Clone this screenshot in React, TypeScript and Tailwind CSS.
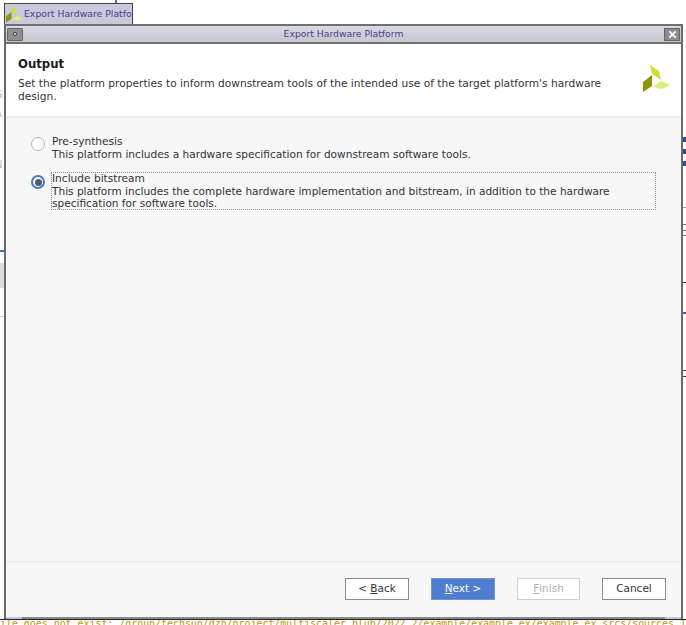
import { ReactNode } from "react";

const sans = "font-['DejaVu_Sans',sans-serif]";

// pezzi dell'applicazione dietro al dialogo
const backdrop = [
  "left-0 top-[250px] h-[2px] w-[4px] bg-[#3f73c4]",
  "left-0 top-[263px] h-[25px] w-[4px] bg-[#dedede]",
  "left-0 top-[316px] h-px w-[4px] bg-[#d0d0d0]",
  "left-[683px] top-[137px] h-[5px] w-[3px] bg-[#24508f]",
  "left-[683px] top-[149px] h-[5px] w-[3px] bg-[#24508f]",
  "left-[683px] top-[161px] h-[5px] w-[3px] bg-[#24508f]",
  "left-[683px] top-[207px] h-px w-[3px] bg-[#8aa0c8]",
  "left-[683px] top-[224px] h-px w-[3px] bg-[#777777]",
  "left-[683px] top-[230px] h-px w-[3px] bg-[#777777]",
  "left-[683px] top-[235px] h-px w-[3px] bg-[#777777]",
  "left-[683px] top-[282px] h-px w-[3px] bg-[#333333]",
  "left-[683px] top-[312px] h-[2px] w-[3px] bg-[#3f63a8]",
  "left-[683px] top-[370px] h-px w-[3px] bg-[#444444]",
  "left-[683px] top-[376px] h-px w-[3px] bg-[#444444]",
  "left-[115px] top-0 h-[3px] w-[2px] bg-[#3f73c4]",
];

function Logo({ className }: { className: string }) {
  return (
    <svg viewBox="0 0 28 28" className={className}>
      <polygon points="7,0 16,6 18,15 9,9" fill="#d3dc3a" />
      <polygon points="0,17 9,10 9,21 0,27" fill="#8e9300" />
      <polygon points="10,22 18,16 27,20 19,24" fill="#e1ea7c" />
    </svg>
  );
}

function WizardButton({
  children,
  kind = "normal",
  width = "w-[64px]",
}: {
  children: ReactNode;
  kind?: "normal" | "primary" | "disabled";
  width?: string;
}) {
  const look = {
    normal: "border-[#8a8a8a] bg-white text-[#333333]",
    primary: "border-[#6f93d8] bg-[#4f7dcf] text-white",
    disabled: "border-[#d0d0d0] bg-white text-[#b0b0b0]",
  }[kind];
  return (
    <button className={`flex h-[22px] items-center justify-center border-[1.5px] text-[10.5px] ${width} ${look}`}>
      {children}
    </button>
  );
}

function Radio({ checked = false }: { checked?: boolean }) {
  return checked ? (
    <span className="mt-[3px] flex h-[14px] w-[14px] shrink-0 items-center justify-center rounded-full border-2 border-[#4a78cc] bg-white">
      <span className="h-[7px] w-[7px] rounded-full bg-[#555a66]" />
    </span>
  ) : (
    <span className="mt-[3px] h-[14px] w-[14px] shrink-0 rounded-full border-[1.5px] border-[#b4b4b4] bg-white" />
  );
}

export default function App() {
  return (
    <div className={`relative h-[625px] w-[686px] overflow-hidden bg-white ${sans}`}>
      {backdrop.map((c) => (
        <div key={c} className={`absolute ${c}`} />
      ))}
      <span className="absolute left-[-4px] top-[87px] text-[10px] text-[#b8b8b8]">S</span>
      <span className="absolute left-[-5px] top-[106px] text-[10px] text-[#b8b8b8]">A</span>
      <span className="absolute left-[-5px] top-[157px] text-[10px] text-[#b8b8b8]">N</span>
      <div className="absolute left-0 top-[618px] whitespace-nowrap font-['DejaVu_Sans_Mono',monospace] text-[9.92px] leading-[12px] text-[#c9920e]">
        ile goes not exist: /group/techsup/dzh/project/multiscaler_blub/2022.2/example/example_ex/example_ex.srcs/sources_1
      </div>
      <div className="absolute left-0 top-[619px] h-px w-[686px] bg-[#222222]" />

      <div className="relative pl-[4px] pt-[3px]">
        {/* linguetta della barra delle applicazioni */}
        <div className="flex h-[21px] w-[129px] items-center gap-[1px] border-x border-t border-[#444444] bg-[#c9c9dd] pl-[1px]">
          <Logo className="h-[17px] w-[17px] shrink-0" />
          <span className="whitespace-nowrap text-[9.3px] text-[#4a3c8c]">Export Hardware Platfo</span>
        </div>

        <div className="flex h-[595px] w-[679px] flex-col border-x-2 border-x-[#6a6a6a]">
          {/* barra del titolo */}
          <div className="flex h-[20px] items-center justify-between border-y-2 border-y-[#707070] bg-linear-to-b from-[#d9d9e7] to-[#c6c6d0] pl-[1px] pr-[1px]">
            <span className="flex h-[13px] w-[16px] items-center justify-center rounded-[1px] border border-[#666666] bg-[#8f8f8f]">
              <span className="h-[4px] w-[4px] rounded-full border border-[#333333] bg-white" />
            </span>
            <span className="text-[9.25px] text-[#4a3c8c]">Export Hardware Platform</span>
            <span className="flex h-[13px] w-[16px] items-center justify-center border border-[#666666] bg-[#8c8c8c]">
              <svg viewBox="0 0 10 10" className="h-[9px] w-[9px]">
                <path d="M1.5 1.5L8.5 8.5M8.5 1.5L1.5 8.5" stroke="#ffffff" strokeWidth="2" />
              </svg>
            </span>
          </div>

          {/* intestazione */}
          <div className="flex h-[74px] justify-between border-b-2 border-b-[#eeeeee] bg-white pl-[12px] pr-[10px]">
            <div className="w-[600px] pt-[12px]">
              <h1 className="text-[11.7px] font-bold leading-[16px] text-[#1a1a1a]">Output</h1>
              <p className="mt-[5px] text-[10.65px] leading-[13px] text-[#333333]">
                Set the platform properties to inform downstream tools of the intended use of the target platform's hardware design.
              </p>
            </div>
            <Logo className="mt-[21px] h-[28px] w-[28px] shrink-0" />
          </div>

          {/* corpo */}
          <div className="flex-1 bg-[#f7f7f7] pl-[25px] pt-[16px] text-[10.6px] leading-[12.5px] text-[#333333]">
            <div className="flex items-start gap-[6px]">
              <Radio />
              <div className="border border-transparent">
                <div>Pre-synthesis</div>
                <div>This platform includes a hardware specification for downstream software tools.</div>
              </div>
            </div>
            <div className="mt-[11px] flex items-start gap-[6px]">
              <Radio checked />
              <div className="h-[38px] w-[605px] border border-dotted border-[#8c8c8c]">
                <div className="-mt-px">Include bitstream</div>
                <div className="text-[10.55px]">This platform includes the complete hardware implementation and bitstream, in addition to the hardware specification for software tools.</div>
              </div>
            </div>
          </div>

          {/* pulsanti */}
          <div className="flex h-[56px] items-start justify-end gap-[22px] border-t-2 border-t-[#eeeeee] bg-[#f7f7f7] pr-[15px] pt-[15px]">
            <WizardButton>
              &lt;&nbsp;<u>B</u>ack
            </WizardButton>
            <WizardButton kind="primary">
              <u>N</u>ext&nbsp;&gt;
            </WizardButton>
            <WizardButton kind="disabled" width="w-[63px]">
              <u>F</u>inish
            </WizardButton>
            <WizardButton>Cancel</WizardButton>
          </div>

          {/* bordo inferiore con le maniglie */}
          <div className="flex h-[2px] shrink-0 justify-between bg-[#8a8a8a]">
            <span className="w-[16px] bg-[#c4c4d6]" />
            <span className="w-[16px] bg-[#c4c4d6]" />
          </div>
        </div>
      </div>
    </div>
  );
}
